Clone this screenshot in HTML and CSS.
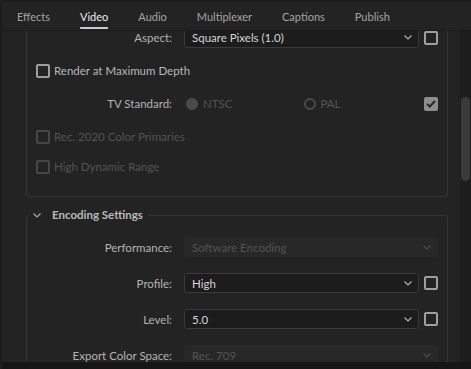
FILE: index.html
```html
<!DOCTYPE html>
<html lang="en">
<head>
    <meta charset="UTF-8">
    <title>Export Settings - Video</title>
    <link rel="stylesheet" href="styles.css">
</head>
<body>
    <div class="app">
        <!-- Tabs -->
        <div class="tabs">
            <div class="tab">Effects</div>
            <div class="tab active">Video</div>
            <div class="tab">Audio</div>
            <div class="tab">Multiplexer</div>
            <div class="tab">Captions</div>
            <div class="tab">Publish</div>
        </div>

        <div class="main">
            <div class="scroll">
                <!-- Basic video settings (scrolled) -->
                <div class="group">
                    <div class="row">
                        <div class="label">Aspect:</div>
                        <div class="select">
                            <span>Square Pixels (1.0)</span>
                            <svg class="chev" width="8" height="5" viewBox="0 0 8 5"><polyline points="0.5,0.5 4,4 7.5,0.5"/></svg>
                        </div>
                        <div class="check"></div>
                    </div>
                    <div class="row option">
                        <div class="check"></div>
                        <span class="opt-text">Render at Maximum Depth</span>
                    </div>
                    <div class="row">
                        <div class="label">TV Standard:</div>
                        <div class="radios">
                            <div class="radio-item"><span class="radio filled"></span><span>NTSC</span></div>
                            <div class="radio-item"><span class="radio"></span><span>PAL</span></div>
                        </div>
                        <div class="check checked">
                            <svg width="10" height="8" viewBox="0 0 10 8"><polyline points="1,4 3.8,6.5 9,1"/></svg>
                        </div>
                    </div>
                    <div class="row option">
                        <div class="check disabled"></div>
                        <span class="opt-text disabled">Rec. 2020 Color Primaries</span>
                    </div>
                    <div class="row option short">
                        <div class="check disabled"></div>
                        <span class="opt-text disabled">High Dynamic Range</span>
                    </div>
                </div>

                <!-- Encoding settings -->
                <fieldset class="section">
                    <legend>
                        <svg class="twisty" width="8" height="5" viewBox="0 0 8 5"><polyline points="0.5,0.5 4,4 7.5,0.5"/></svg>
                        <span>Encoding Settings</span>
                    </legend>
                    <div class="row tall">
                        <div class="label">Performance:</div>
                        <div class="select wide disabled">
                            <span>Software Encoding</span>
                            <svg class="chev" width="8" height="5" viewBox="0 0 8 5"><polyline points="0.5,0.5 4,4 7.5,0.5"/></svg>
                        </div>
                    </div>
                    <div class="row tall">
                        <div class="label">Profile:</div>
                        <div class="select">
                            <span>High</span>
                            <svg class="chev" width="8" height="5" viewBox="0 0 8 5"><polyline points="0.5,0.5 4,4 7.5,0.5"/></svg>
                        </div>
                        <div class="check"></div>
                    </div>
                    <div class="row tall">
                        <div class="label">Level:</div>
                        <div class="select">
                            <span>5.0</span>
                            <svg class="chev" width="8" height="5" viewBox="0 0 8 5"><polyline points="0.5,0.5 4,4 7.5,0.5"/></svg>
                        </div>
                        <div class="check"></div>
                    </div>
                    <div class="row tall">
                        <div class="label">Export Color Space:</div>
                        <div class="select wide disabled">
                            <span>Rec. 709</span>
                            <svg class="chev" width="8" height="5" viewBox="0 0 8 5"><polyline points="0.5,0.5 4,4 7.5,0.5"/></svg>
                        </div>
                    </div>
                </fieldset>
            </div>

            <div class="scrollbar">
                <div class="thumb"></div>
            </div>
        </div>

        <div class="footer"></div>
    </div>
</body>
</html>
```

FILE: styles.css
```css
html, body {
    margin: 0;
    padding: 0;
    background: #232323;
}

body {
    font-family: Lato, "Open Sans", sans-serif;
    font-size: 11.5px;
    color: #b5b5b5;
}

.app {
    width: 471px;
    height: 369px;
    display: flex;
    flex-direction: column;
    box-sizing: border-box;
    border-top: 2px solid #1d1d1d;
    border-left: 2px solid #1d1d1d;
    overflow: hidden;
}

/* Tabs */
.tabs {
    height: 29px;
    box-sizing: border-box;
    display: flex;
    gap: 30px;
    padding-left: 15px;
    border-bottom: 1px solid #1b1b1b;
    font-size: 11px;
}

.tab {
    padding-top: 7px;
    padding-bottom: 2px;
    line-height: 16px;
    height: 27px;
    box-sizing: border-box;
    color: #a3a3a3;
    border-bottom: 2px solid transparent;
}

.tab.active {
    color: #ececec;
    border-bottom-color: #c9c9c9;
    border-radius: 1px;
}

/* Main area */
.main {
    flex: 1;
    display: flex;
    overflow: hidden;
}

.scroll {
    flex: 1;
    padding-left: 24px;
    padding-right: 12px;
    overflow: hidden;
}

.group {
    margin-top: -11px;
    border: 1px solid #363636;
    border-radius: 3px;
    padding-bottom: 16px;
}

.row {
    height: 33px;
    display: flex;
    align-items: center;
}

.row.short {
    height: 27px;
}

.row.tall {
    height: 36px;
}

.label {
    width: 145px;
    margin-right: 12px;
    text-align: right;
    color: #b3b3b3;
    white-space: nowrap;
}

.select {
    width: 235px;
    height: 20px;
    box-sizing: border-box;
    display: flex;
    align-items: center;
    justify-content: space-between;
    padding: 0 6px 0 7px;
    background: #1c1c1c;
    border: 1px solid #3a3a3a;
    border-radius: 3px;
    color: #d6d6d6;
}

.select.wide {
    width: 254px;
}

.select.disabled {
    background: #282828;
    border-color: #282828;
    color: #535353;
}

.chev {
    fill: none;
    stroke: #b0b0b0;
    stroke-width: 1.2;
}

.select.disabled .chev {
    stroke: #4a4a4a;
}

.check {
    width: 14px;
    height: 14px;
    box-sizing: border-box;
    margin-left: 5px;
    border: 2px solid #9e9e9e;
    border-radius: 2px;
    display: flex;
    align-items: center;
    justify-content: center;
}

.check.checked {
    background: #8e8e8e;
    border-color: #8e8e8e;
}

.check.checked svg {
    fill: none;
    stroke: #262626;
    stroke-width: 2;
}

.check.disabled {
    border-color: #474747;
}

.option {
    padding-left: 9px;
}

.option .check {
    margin-left: 0;
    margin-right: 4px;
}

.opt-text {
    color: #b8b8b8;
}

.opt-text.disabled {
    color: #535353;
}

.radios {
    width: 235px;
    display: flex;
}

.radio-item {
    flex: 1;
    display: flex;
    align-items: center;
    padding-left: 2px;
    color: #535353;
}

.radio {
    width: 12px;
    height: 12px;
    box-sizing: border-box;
    border-radius: 50%;
    border: 2px solid #4a4a4a;
    margin-right: 5px;
}

.radio.filled {
    background: #4a4a4a;
}

/* Encoding section */
.section {
    margin: 10px 0 0 0;
    padding: 6px 0 0 0;
    border: 1px solid #363636;
    border-radius: 3px;
    min-width: 0;
}

.section legend {
    margin-left: 3px;
    padding: 0 5px 0 3px;
    line-height: 16px;
    display: flex;
    align-items: center;
    color: #b9b9b9;
    font-weight: bold;
}

.twisty {
    fill: none;
    stroke: #a8a8a8;
    stroke-width: 1.2;
    margin-right: 11px;
}

/* Scrollbar */
.scrollbar {
    width: 11px;
    background: #1d1d1d;
}

.thumb {
    margin-top: 66px;
    margin-left: 1px;
    width: 9px;
    height: 84px;
    border-radius: 5px;
    background: #3a3a3a;
}

.footer {
    height: 7px;
    background: #161616;
}
```
